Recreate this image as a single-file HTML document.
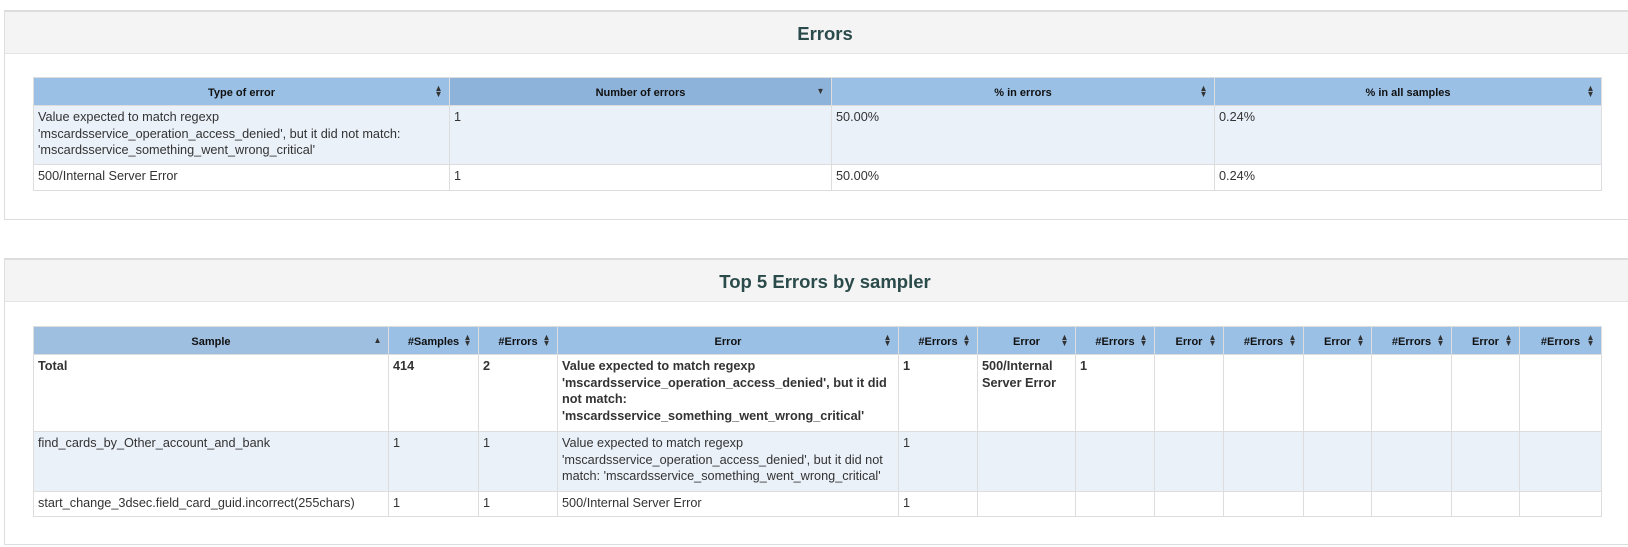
<!DOCTYPE html>
<html><head><meta charset="utf-8"><style>
body{margin:0;background:#fff;font-family:"Liberation Sans",sans-serif;width:1628px;height:547px;overflow:hidden;position:relative;}
.panel{position:absolute;left:4px;width:1640px;border:1px solid #ddd;border-top:2px solid #ddd;background:#fff;}
.ph{background:#f4f4f4;border-bottom:1px solid #e3e3e3;height:41px;line-height:43px;text-align:center;font-size:18.5px;font-weight:bold;color:#2b4b4b;}
table{position:absolute;left:28px;border-collapse:collapse;table-layout:fixed;font-size:12.7px;color:#333;}
th{background:#9ac0e6;font-size:11px;font-weight:bold;color:#111;height:24px;border:1px solid #ddd;position:relative;padding:3px 0 0;text-align:center;}
th.s{background:#8db3da;}
th .ic{position:absolute;right:6px;top:7px;font-size:9px;line-height:6px;color:#333;transform:scaleX(0.9);}
td{border:1px solid #ddd;vertical-align:top;padding:3px 4px;line-height:16.5px;}
tr.o td{background:#eaf1f9;}
tr.b td{font-weight:bold;}
</style></head><body>
<div class="panel" style="top:10px;height:207px;">
<div class="ph">Errors</div>
<table style="top:65px;width:1568px;">
<colgroup><col style="width:416px"><col style="width:382px"><col style="width:383px"><col style="width:387px"></colgroup>
<tr><th>Type of error<span class="ic">▲<br>▼</span></th><th class="s">Number of errors<span class="ic" style="top:10px">▼</span></th><th>% in errors<span class="ic">▲<br>▼</span></th><th>% in all samples<span class="ic">▲<br>▼</span></th></tr>
<tr class="o" style="height:59px"><td>Value expected to match regexp 'mscardsservice_operation_access_denied', but it did not match: 'mscardsservice_something_went_wrong_critical'</td><td>1</td><td>50.00%</td><td>0.24%</td></tr>
<tr style="height:26px"><td>500/Internal Server Error</td><td>1</td><td>50.00%</td><td>0.24%</td></tr>
</table>
</div>
<div class="panel" style="top:258px;height:284px;">
<div class="ph">Top 5 Errors by sampler</div>
<table style="top:66px;width:1568px;">
<colgroup><col style="width:355px"><col style="width:90px"><col style="width:79px"><col style="width:341px"><col style="width:79px"><col style="width:98px"><col style="width:79px"><col style="width:69px"><col style="width:80px"><col style="width:68px"><col style="width:80px"><col style="width:68px"><col style="width:82px"></colgroup>
<tr><th class="s" style="background:#9fbfe0">Sample<span class="ic" style="top:10px">▲</span></th><th>#Samples<span class="ic">▲<br>▼</span></th><th>#Errors<span class="ic">▲<br>▼</span></th><th>Error<span class="ic">▲<br>▼</span></th><th>#Errors<span class="ic">▲<br>▼</span></th><th>Error<span class="ic">▲<br>▼</span></th><th>#Errors<span class="ic">▲<br>▼</span></th><th>Error<span class="ic">▲<br>▼</span></th><th>#Errors<span class="ic">▲<br>▼</span></th><th>Error<span class="ic">▲<br>▼</span></th><th>#Errors<span class="ic">▲<br>▼</span></th><th>Error<span class="ic">▲<br>▼</span></th><th>#Errors<span class="ic">▲<br>▼</span></th></tr>
<tr class="b" style="height:77px"><td>Total</td><td>414</td><td>2</td><td>Value expected to match regexp 'mscardsservice_operation_access_denied', but it did not match: 'mscardsservice_something_went_wrong_critical'</td><td>1</td><td>500/Internal Server Error</td><td>1</td><td></td><td></td><td></td><td></td><td></td><td></td></tr>
<tr class="o" style="height:60px"><td>find_cards_by_Other_account_and_bank</td><td>1</td><td>1</td><td>Value expected to match regexp 'mscardsservice_operation_access_denied', but it did not match: 'mscardsservice_something_went_wrong_critical'</td><td>1</td><td></td><td></td><td></td><td></td><td></td><td></td><td></td><td></td></tr>
<tr style="height:25px"><td>start_change_3dsec.field_card_guid.incorrect(255chars)</td><td>1</td><td>1</td><td>500/Internal Server Error</td><td>1</td><td></td><td></td><td></td><td></td><td></td><td></td><td></td><td></td></tr>
</table>
</div>
</body></html>
